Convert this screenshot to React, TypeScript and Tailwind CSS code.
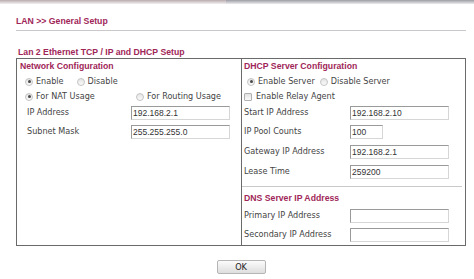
import React from "react";

const LBL = "font-['DejaVu_Sans_Condensed','Liberation_Sans',sans-serif] text-[9px] text-[#444]";
const HEAD = "font-['Liberation_Sans',Arial,sans-serif] font-bold text-[8.7px] text-[#a02658]";

function Radio({ checked }: { checked?: boolean }) {
  return (
    <span className="inline-flex w-[8px] h-[8px] rounded-full border border-[#c4c4c4] bg-gradient-to-b from-[#e4e4e4] to-[#fbfbfb] items-center justify-center shrink-0">
      {checked && <span className="w-[3px] h-[3px] rounded-full bg-[#4a4a4a]" />}
    </span>
  );
}

function Check() {
  return (
    <span className="inline-block w-[8px] h-[8px] rounded-[1px] border border-[#b0b0b0] bg-gradient-to-b from-[#e2e2e2] to-[#fafafa] shrink-0" />
  );
}

function Input({ value, w }: { value?: string; w: string }) {
  return (
    <div
      className={`${w} h-[14px] border border-t-[#9a9a9a] border-l-[#9a9a9a] border-r-[#d6d6d6] border-b-[#d6d6d6] bg-white flex items-center pl-[1px] font-['Liberation_Sans',Arial,sans-serif] text-[8.5px] text-[#333] leading-none`}
    >
      {value}
    </div>
  );
}

export default function App() {
  return (
    <div className="w-[474px] h-[279px] bg-white overflow-hidden">
      <div className="flex h-[4px]">
        <div className="w-[226px] bg-gradient-to-b from-[#b9acae] to-[#f4f0f1]" />
        <div className="flex-1 bg-gradient-to-b from-[#9c9ca4] to-[#ececef]" />
      </div>
      <div className="pl-[16px] pr-[8px]">
        <div className={`${HEAD} mt-[11px] h-[12px] leading-[12px]`}>LAN &gt;&gt; General Setup</div>
        <div className="mt-[3px] border-t border-[#c9c9cc]" />
        <div className={`${HEAD} mt-[15px] ml-[2px] h-[12px] leading-[12px]`}>Lan 2 Ethernet TCP / IP and DHCP Setup</div>
        <div className="border border-[#6a6a6a] h-[188px] flex">
          <div className="w-[225px] border-r border-[#6a6a6a] flex flex-col">
            <div className={`${HEAD} h-[15px] flex items-center pl-[3px]`}>Network Configuration</div>
            <div className={`${LBL} h-[15px] flex items-center pl-[8px]`}>
              <Radio checked />
              <span className="ml-[3px]">Enable</span>
              <span className="ml-[13px] flex items-center">
                <Radio />
                <span className="ml-[3px]">Disable</span>
              </span>
            </div>
            <div className={`${LBL} h-[15px] flex items-center pl-[8px]`}>
              <Radio checked />
              <span className="ml-[3px] w-[100px]">For NAT Usage</span>
              <Radio />
              <span className="ml-[3px]">For Routing Usage</span>
            </div>
            <div className={`${LBL} h-[18px] flex items-center pl-[10px]`}>
              <span className="w-[104px]">IP Address</span>
              <Input value="192.168.2.1" w="w-[99px]" />
            </div>
            <div className={`${LBL} h-[20px] flex items-center pl-[10px]`}>
              <span className="w-[104px]">Subnet Mask</span>
              <Input value="255.255.255.0" w="w-[99px]" />
            </div>
          </div>
          <div className="flex-1 flex flex-col">
            <div className={`${HEAD} h-[15px] flex items-center pl-[2px]`}>DHCP Server Configuration</div>
            <div className={`${LBL} h-[15px] flex items-center pl-[5px]`}>
              <Radio checked />
              <span className="ml-[3px]">Enable Server</span>
              <span className="ml-[5px] flex items-center">
                <Radio />
                <span className="ml-[3px]">Disable Server</span>
              </span>
            </div>
            <div className={`${LBL} h-[15px] flex items-center pl-[2px]`}>
              <Check />
              <span className="ml-[4px]">Enable Relay Agent</span>
            </div>
            <div className={`${LBL} h-[18px] flex items-center pl-[2px]`}>
              <span className="w-[106px]">Start IP Address</span>
              <Input value="192.168.2.10" w="w-[99px]" />
            </div>
            <div className={`${LBL} h-[20px] flex items-center pl-[2px]`}>
              <span className="w-[106px]">IP Pool Counts</span>
              <Input value="100" w="w-[33px]" />
            </div>
            <div className={`${LBL} h-[20px] flex items-center pl-[2px]`}>
              <span className="w-[106px]">Gateway IP Address</span>
              <Input value="192.168.2.1" w="w-[99px]" />
            </div>
            <div className={`${LBL} h-[20px] flex items-center pl-[2px]`}>
              <span className="w-[106px]">Lease Time</span>
              <Input value="259200" w="w-[99px]" />
            </div>
            <div className="mt-[4px] mr-[3px] border-t border-[#c9c9cc]" />
            <div className={`${HEAD} h-[19px] flex items-center pt-[5px] pl-[2px]`}>DNS Server IP Address</div>
            <div className={`${LBL} h-[19px] flex items-center pl-[2px]`}>
              <span className="w-[106px]">Primary IP Address</span>
              <Input w="w-[99px]" />
            </div>
            <div className={`${LBL} h-[19px] flex items-center pl-[2px]`}>
              <span className="w-[106px]">Secondary IP Address</span>
              <Input w="w-[99px]" />
            </div>
          </div>
        </div>
        <div className="mt-[14px] flex justify-center">
          <button className="w-[49px] h-[14px] border border-[#b5b5b5] rounded-[2px] bg-gradient-to-b from-[#fbfbfb] to-[#dedede] font-['DejaVu_Sans_Condensed','Liberation_Sans',sans-serif] text-[9px] text-[#222] leading-none flex items-center justify-center">
            OK
          </button>
        </div>
      </div>
    </div>
  );
}
